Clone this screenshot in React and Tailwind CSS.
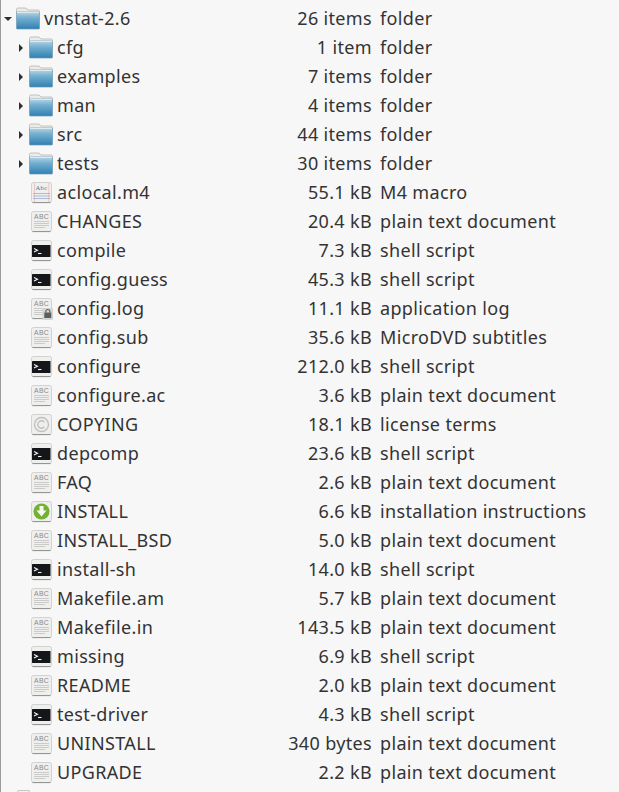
import React from "react";

const rows = [
  { name: "cfg", size: "1 item", type: "folder", icon: "folder" },
  { name: "examples", size: "7 items", type: "folder", icon: "folder" },
  { name: "man", size: "4 items", type: "folder", icon: "folder" },
  { name: "src", size: "44 items", type: "folder", icon: "folder" },
  { name: "tests", size: "30 items", type: "folder", icon: "folder" },
  { name: "aclocal.m4", size: "55.1 kB", type: "M4 macro", icon: "macro" },
  { name: "CHANGES", size: "20.4 kB", type: "plain text document", icon: "text" },
  { name: "compile", size: "7.3 kB", type: "shell script", icon: "shell" },
  { name: "config.guess", size: "45.3 kB", type: "shell script", icon: "shell" },
  { name: "config.log", size: "11.1 kB", type: "application log", icon: "log" },
  { name: "config.sub", size: "35.6 kB", type: "MicroDVD subtitles", icon: "text" },
  { name: "configure", size: "212.0 kB", type: "shell script", icon: "shell" },
  { name: "configure.ac", size: "3.6 kB", type: "plain text document", icon: "text" },
  { name: "COPYING", size: "18.1 kB", type: "license terms", icon: "copying" },
  { name: "depcomp", size: "23.6 kB", type: "shell script", icon: "shell" },
  { name: "FAQ", size: "2.6 kB", type: "plain text document", icon: "text" },
  { name: "INSTALL", size: "6.6 kB", type: "installation instructions", icon: "install" },
  { name: "INSTALL_BSD", size: "5.0 kB", type: "plain text document", icon: "text" },
  { name: "install-sh", size: "14.0 kB", type: "shell script", icon: "shell" },
  { name: "Makefile.am", size: "5.7 kB", type: "plain text document", icon: "text" },
  { name: "Makefile.in", size: "143.5 kB", type: "plain text document", icon: "text" },
  { name: "missing", size: "6.9 kB", type: "shell script", icon: "shell" },
  { name: "README", size: "2.0 kB", type: "plain text document", icon: "text" },
  { name: "test-driver", size: "4.3 kB", type: "shell script", icon: "shell" },
  { name: "UNINSTALL", size: "340 bytes", type: "plain text document", icon: "text" },
  { name: "UPGRADE", size: "2.2 kB", type: "plain text document", icon: "text" },
];

function FolderIcon() {
  return (
    <svg width="24" height="24" viewBox="0 0 24 24" className="shrink-0">
      <defs>
        <linearGradient id="folderBlue" x1="0" y1="0" x2="0" y2="1">
          <stop offset="0" stopColor="#b4d5e6" />
          <stop offset="0.35" stopColor="#74afd0" />
          <stop offset="1" stopColor="#2f80b2" />
        </linearGradient>
      </defs>
      <path d="M0.5 5 V2.5 Q0.5 1 2 1 H10 L12 3 H22 Q23.5 3 23.5 4.5 V6 H0.5 Z" fill="#ecebe8" stroke="#b5b5b2" strokeWidth="0.8" />
      <rect x="0.5" y="5" width="23" height="17" rx="0.8" fill="url(#folderBlue)" stroke="#6f9ab5" strokeWidth="0.7" />
      <path d="M1 5.5 H23" stroke="#dfe9ee" strokeWidth="1" />
    </svg>
  );
}

function Page({ children }) {
  return (
    <svg width="24" height="24" viewBox="0 0 24 24" className="shrink-0">
      <rect x="2.5" y="1.5" width="20" height="20" rx="2" fill="#efefed" stroke="#d2d2d0" strokeWidth="1" />
      <path d="M3.5 21.6 H21.5" stroke="#8f8f8d" strokeWidth="1" />
      {children}
    </svg>
  );
}

function TextLines() {
  return (
    <g stroke="#c2c2c0" strokeWidth="0.8">
      <path d="M5 11.5 H20" />
      <path d="M5 13.5 H20" />
      <path d="M5 15.5 H20" />
      <path d="M5 17.5 H16" />
    </g>
  );
}

function FileIcon({ kind }) {
  if (kind === "folder") return <FolderIcon />;
  if (kind === "shell") {
    return (
      <Page>
        <rect x="3" y="6" width="18.5" height="12" rx="0.5" fill="#14161a" />
        <path d="M5 9.5 L8.5 11.2 L5 13" fill="none" stroke="#f2f2f2" strokeWidth="1.1" />
        <path d="M9 14.5 H12.5" stroke="#f2f2f2" strokeWidth="1.1" />
      </Page>
    );
  }
  if (kind === "macro") {
    return (
      <Page>
        <path d="M5.5 2 V21 M19.8 2 V21" stroke="#eeb3b3" strokeWidth="0.7" />
        <text x="12.5" y="9" textAnchor="middle" fontSize="6.5" fontFamily="Liberation Serif, serif" fill="#4f6fa8">Abc</text>
        <g stroke="#8fa6cc" strokeWidth="0.7">
          <path d="M4 12.5 H21" />
          <path d="M4 15 H21" />
          <path d="M4 17.5 H21" />
        </g>
      </Page>
    );
  }
  if (kind === "copying") {
    return (
      <Page>
        <circle cx="12.5" cy="11.5" r="7" fill="none" stroke="#c0c0be" strokeWidth="1.4" />
        <path d="M15.4 9.2 A3.7 3.7 0 1 0 15.4 13.8" fill="none" stroke="#c0c0be" strokeWidth="1.4" />
      </Page>
    );
  }
  if (kind === "install") {
    return (
      <Page>
        <circle cx="12.5" cy="11.5" r="8" fill="#74b132" />
        <path d="M10.5 6 H14.5 V10.5 H17.5 L12.5 16.5 L7.5 10.5 H10.5 Z" fill="#f6f9f0" />
      </Page>
    );
  }
  return (
    <Page>
      <text x="12.5" y="9" textAnchor="middle" fontSize="6.8" letterSpacing="0.3" fontFamily="Liberation Sans, sans-serif" fill="#8a8a88">ABC</text>
      <TextLines />
      {kind === "log" && (
        <g>
          <rect x="13.5" y="11" width="10.5" height="12" rx="1" fill="#d4d4d2" />
          <path d="M16.8 15.5 V14.5 A2 2 0 0 1 20.8 14.5 V15.5" fill="none" stroke="#5e5e5c" strokeWidth="1.1" />
          <rect x="15.3" y="15.5" width="7" height="5.5" fill="#5e5e5c" />
        </g>
      )}
    </Page>
  );
}

function Row({ name, size, type, icon, arrow, indent }) {
  return (
    <div className="flex h-[29px] items-center">
      <div className={`flex w-[279px] shrink-0 items-center ${indent}`}>
        <span className="flex w-[15px] shrink-0 items-center justify-center pr-[1px]">
          {arrow === "right" && <span className="h-0 w-0 border-y-[4px] border-l-[4px] border-y-transparent border-l-[#2e2e2e]" />}
          {arrow === "down" && <span className="h-0 w-0 border-x-[4px] border-t-[4px] border-x-transparent border-t-[#2e2e2e]" />}
        </span>
        <FileIcon kind={icon} />
        <span className="ml-[4px] whitespace-nowrap">{name}</span>
      </div>
      <div className="w-[92px] shrink-0 whitespace-nowrap text-right">{size}</div>
      <div className="ml-[8px] whitespace-nowrap">{type}</div>
    </div>
  );
}

export default function App() {
  return (
    <div className="h-[792px] w-[619px] overflow-hidden border-l border-[#9a9a9a] bg-[#f7f7f7] pt-[4px] font-['Noto_Sans',sans-serif] text-[18px] tracking-[0.34px] text-[#333333]">
      <Row name="vnstat-2.6" size="26 items" type="folder" icon="folder" arrow="down" indent="pl-[0px]" />
      {rows.map((row) => (
        <Row
          key={row.name}
          {...row}
          arrow={row.icon === "folder" ? "right" : null}
          indent="pl-[13px]"
        />
      ))}
      <div className="ml-[16px] mt-[3px] h-[6px] w-[13px] rounded-t-[2px] border border-b-0 border-[#c6c6c4] bg-[#f2f2f0]" />
    </div>
  );
}
